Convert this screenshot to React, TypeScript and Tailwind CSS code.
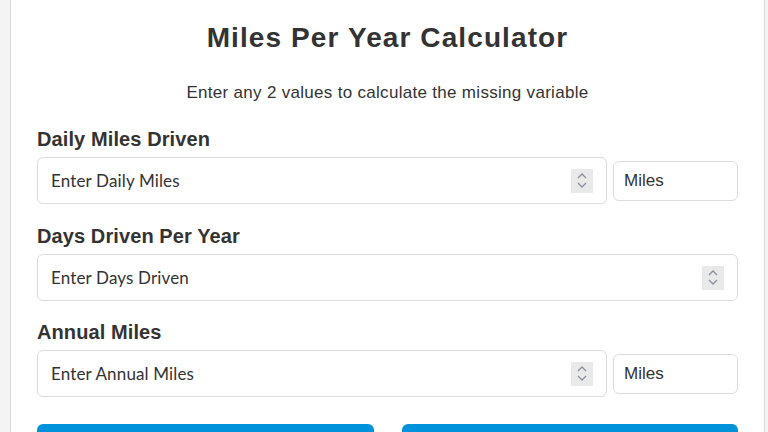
import type { ReactNode } from 'react';

const sans = { fontFamily: '"Liberation Sans", Arial, sans-serif' };
const inputFont = { fontFamily: 'Lato, "Open Sans", sans-serif' };

function Spinner() {
  return (
    <div className="flex h-[24px] w-[22px] shrink-0 flex-col items-center justify-center gap-[3px] bg-[#e9e9e9]">
      <svg width="10" height="6" viewBox="0 0 10 6" fill="none">
        <path d="M1 5 L5 1 L9 5" stroke="#8a8f99" strokeWidth="1.3" />
      </svg>
      <svg width="10" height="6" viewBox="0 0 10 6" fill="none">
        <path d="M1 1 L5 5 L9 1" stroke="#8a8f99" strokeWidth="1.3" />
      </svg>
    </div>
  );
}

function NumberField({ placeholder }: { placeholder: string }) {
  return (
    <div className="flex h-[47px] min-w-0 flex-1 items-center rounded-[6px] border border-[#dcdcdc] bg-white pl-[13px] pr-[13px]">
      <span className="flex-1 text-[17px] tracking-[0.15px] text-[#333]" style={inputFont}>
        {placeholder}
      </span>
      <Spinner />
    </div>
  );
}

function UnitSelect({ label }: { label: string }) {
  return (
    <div
      className="flex h-[40px] w-[125px] shrink-0 items-center rounded-[6px] border border-[#dcdcdc] bg-white pl-[10px] text-[17px] text-[#333]"
      style={sans}
    >
      {label}
    </div>
  );
}

function Field({ label, children, className }: { label: string; children: ReactNode; className?: string }) {
  return (
    <div className={className}>
      <label
        className="mb-[7px] block text-[20px] font-bold leading-[22px] tracking-[0.1px] text-[#333]"
        style={sans}
      >
        {label}
      </label>
      <div className="flex items-center gap-[6px]">{children}</div>
    </div>
  );
}

export default function App() {
  return (
    <div className="min-h-screen bg-[#f4f4f4] pl-[10px] pr-[3px]">
      <div className="min-h-[432px] border-x border-[#d9d9d9] bg-white px-[26px] pt-[21px]" style={sans}>
        <h1 className="text-center text-[28px] font-bold leading-[34px] tracking-[1.1px] text-[#333]">
          Miles Per Year Calculator
        </h1>
        <p className="mt-[28px] text-center text-[17px] leading-[20px] tracking-[0.3px] text-[#333]">
          Enter any 2 values to calculate the missing variable
        </p>

        <Field label="Daily Miles Driven" className="mt-[25px]">
          <NumberField placeholder="Enter Daily Miles" />
          <UnitSelect label="Miles" />
        </Field>

        <Field label="Days Driven Per Year" className="mt-[21px]">
          <NumberField placeholder="Enter Days Driven" />
        </Field>

        <Field label="Annual Miles" className="mt-[20px]">
          <NumberField placeholder="Enter Annual Miles" />
          <UnitSelect label="Miles" />
        </Field>

        <div className="mt-[27px] grid grid-cols-2 gap-[28px]">
          <button className="h-[48px] rounded-[6px] bg-[#0093dc] text-[18px] font-bold text-white">Calculate</button>
          <button className="h-[48px] rounded-[6px] bg-[#0093dc] text-[18px] font-bold text-white">Clear</button>
        </div>
      </div>
    </div>
  );
}
